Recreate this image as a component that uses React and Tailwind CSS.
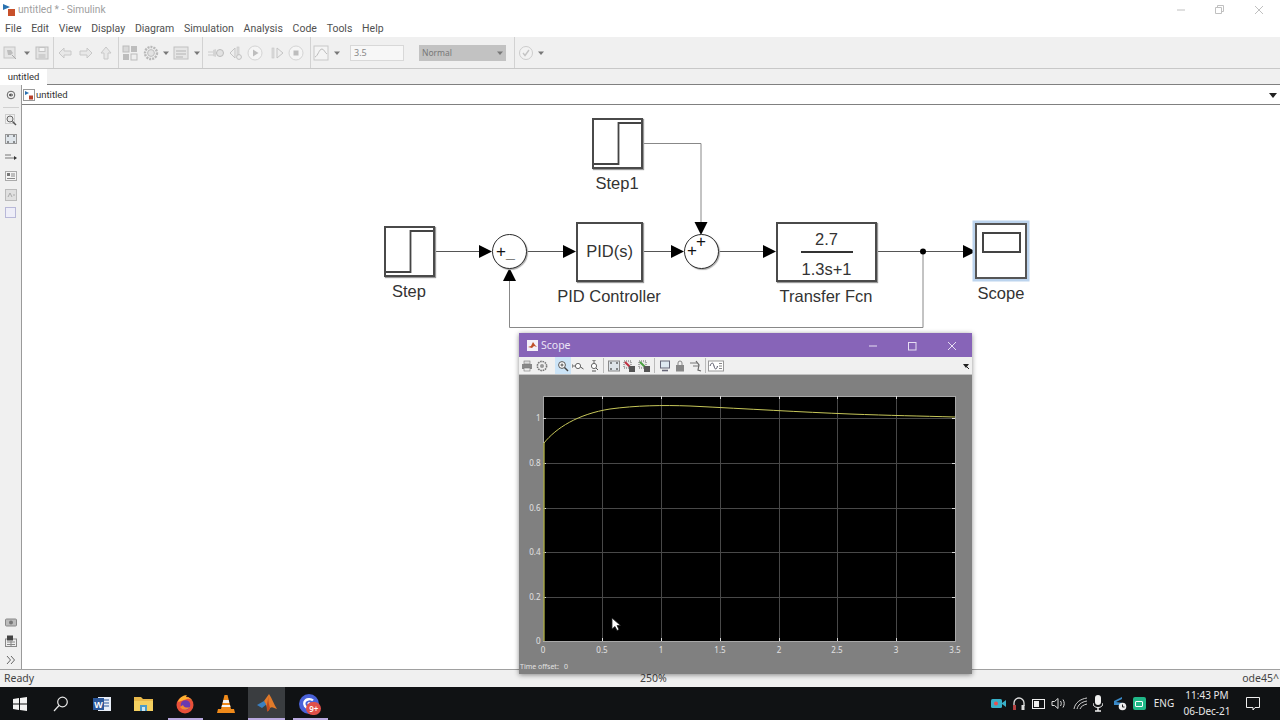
import React from "react";

const ui = { fontFamily: '"Noto Sans", "Open Sans", sans-serif' };
const menuFont = { fontFamily: 'Roboto, "Noto Sans", sans-serif' };

// faded toolbar icons
const Caret = ({ className = "" }) => (
  <svg width="8" height="8" viewBox="0 0 8 8" className={`shrink-0 ${className}`}>
    <path d="M1 2.5h6L4 6z" fill="#777" />
  </svg>
);

const Sep = ({ className = "" }) => <div className={`w-px h-[31px] bg-[#d2d2d2] shrink-0 ${className}`} />;

const Ico = ({ className = "", children }) => (
  <svg width="16" height="16" viewBox="0 0 16 16" fill="none" className={`shrink-0 ${className}`}>
    {children}
  </svg>
);

const OpenIco = () => (
  <>
    <rect x="1" y="2" width="11" height="11" stroke="#c4c4c4" fill="#e6e6e6" />
    <path d="M4 5h4l2 3-2 2H5z" fill="#bdbdbd" />
    <path d="M9 10l4 4" stroke="#aaa" />
  </>
);
const SaveIco = () => (
  <>
    <rect x="2" y="2" width="12" height="12" stroke="#bdbdbd" fill="#e4e4e4" />
    <rect x="5" y="2.5" width="6" height="4" fill="#f4f4f4" stroke="#c4c4c4" />
    <rect x="4.5" y="9" width="7" height="4.5" fill="#cfcfcf" />
  </>
);
const ArrowLeftIco = () => <path d="M2 8l5-5v3h7v4H7v3z" fill="#e8e8e8" stroke="#c8c8c8" />;
const ArrowRightIco = () => <path d="M14 8L9 3v3H2v4h7v3z" fill="#e8e8e8" stroke="#c8c8c8" />;
const ArrowUpIco = () => <path d="M8 2l5 6h-3v6H6V8H3z" fill="#e8e8e8" stroke="#c8c8c8" />;
const GridIco = () => (
  <>
    <rect x="1" y="1" width="6" height="6" fill="#d9d9d9" stroke="#bbb" />
    <rect x="9" y="1" width="6" height="6" fill="#bdbdbd" />
    <rect x="1" y="9" width="6" height="6" fill="#bdbdbd" />
    <rect x="9" y="9" width="6" height="6" fill="#eee" stroke="#bbb" />
  </>
);
const GearIco = () => (
  <>
    <circle cx="8" cy="8" r="6" stroke="#b8b8b8" strokeWidth="2.4" strokeDasharray="2 1" />
    <circle cx="8" cy="8" r="3.4" fill="#e2e2e2" stroke="#bdbdbd" />
  </>
);
const LibIco = () => (
  <>
    <rect x="1" y="2" width="14" height="12" fill="#e6e6e6" stroke="#c0c0c0" />
    <path d="M3 6h10M3 9h10M3 12h7" stroke="#b4b4b4" />
  </>
);
const RecIco = () => (
  <>
    <path d="M0 7h5M0 10h5" stroke="#ccc" />
    <path d="M5 5l3-1v8l-3-1z" fill="#d4d4d4" />
    <circle cx="12" cy="8" r="3.5" fill="#e2e2e2" stroke="#bbb" />
  </>
);
const StepBackIco = () => (
  <>
    <path d="M7 3L2 8l5 5z" fill="#eee" stroke="#c4c4c4" />
    <rect x="9" y="2" width="2" height="9" fill="#ddd" stroke="#c4c4c4" strokeWidth=".6" />
    <circle cx="11" cy="12" r="2.4" fill="#eee" stroke="#c0c0c0" />
  </>
);
const PlayIco = () => (
  <>
    <circle cx="8" cy="8" r="7" fill="#f5f5f5" stroke="#d4d4d4" />
    <path d="M6 4.5L11.5 8 6 11.5z" fill="#bdbdbd" />
  </>
);
const StepFwdIco = () => (
  <>
    <rect x="3" y="3" width="2" height="10" fill="#ddd" stroke="#c4c4c4" strokeWidth=".6" />
    <path d="M8 3l6 5-6 5z" fill="#eee" stroke="#c4c4c4" />
  </>
);
const StopIco = () => (
  <>
    <circle cx="8" cy="8" r="7" fill="#f5f5f5" stroke="#d4d4d4" />
    <rect x="5.5" y="5.5" width="5" height="5" fill="#bdbdbd" />
  </>
);
const ScopeIco = () => (
  <>
    <rect x="1" y="1" width="14" height="14" fill="#f4f4f4" stroke="#c8c8c8" />
    <path d="M2 12c3-1 4-8 7-8 2 0 3 4 5 5" stroke="#bbb" />
  </>
);
const CheckIco = () => (
  <>
    <circle cx="8" cy="8" r="6.5" fill="#f2f2f2" stroke="#ccc" />
    <path d="M5 8l2 2.5L11 5" stroke="#c4c4c4" strokeWidth="1.4" />
  </>
);

const ModelIco = ({ size = 12 }) => (
  <svg width={size} height={size} viewBox="0 0 12 12" className="shrink-0">
    <rect x=".5" y=".5" width="11" height="11" fill="#fff" stroke="#999" />
    <path d="M2 2l4 2-4 2z" fill="#2a6fb0" />
    <rect x="6" y="6.5" width="4" height="4" fill="#b8402a" />
  </svg>
);

const Toolbar = () => (
  <div className="flex items-center h-[32px] bg-[#f0f0f0] border-b border-[#c8c8c8] pl-[3px] shrink-0">
    <Ico><OpenIco /></Ico>
    <Caret className="ml-[4px]" />
    <Ico className="ml-[3px]"><SaveIco /></Ico>
    <Sep className="ml-[3px]" />
    <Ico className="ml-[3px]"><ArrowLeftIco /></Ico>
    <Ico className="ml-[5px]"><ArrowRightIco /></Ico>
    <Ico className="ml-[4px]"><ArrowUpIco /></Ico>
    <Sep className="ml-[4px]" />
    <Ico className="ml-[3px]"><GridIco /></Ico>
    <Ico className="ml-[5px]"><GearIco /></Ico>
    <Caret className="ml-[3px]" />
    <Ico className="ml-[3px]"><LibIco /></Ico>
    <Caret className="ml-[4px]" />
    <Sep className="ml-[1px]" />
    <Ico className="ml-[5px]"><RecIco /></Ico>
    <Ico className="ml-[4px]"><StepBackIco /></Ico>
    <Ico className="ml-[3px]"><PlayIco /></Ico>
    <Ico className="ml-[6px]"><StepFwdIco /></Ico>
    <Ico className="ml-[3px]"><StopIco /></Ico>
    <Sep className="ml-[6px]" />
    <Ico className="ml-[2px]"><ScopeIco /></Ico>
    <Caret className="ml-[4px]" />
    <div className="ml-[9px] w-[54px] h-[16px] bg-[#f7f7f7] border border-[#d8d8d8] text-[9px] leading-[14px] pl-[3px] text-[#888]">3.5</div>
    <div className="ml-[15px] w-[87px] h-[16px] bg-[#c2c2c2] text-[8.5px] leading-[16px] pl-[3px] text-[#777] flex items-center justify-between pr-[2px]">
      Normal
      <Caret />
    </div>
    <Sep className="ml-[8px]" />
    <Ico className="ml-[3px]"><CheckIco /></Ico>
    <Caret className="ml-[3px]" />
  </div>
);

const RailIcon = ({ children, className = "" }) => (
  <svg width="12" height="12" viewBox="0 0 12 12" fill="none" className={`shrink-0 ${className}`}>
    {children}
  </svg>
);

const LeftRail = () => (
  <div className="w-[22px] shrink-0 bg-[#f0f0f0] border-r border-[#9a9a9a] flex flex-col items-center">
    <div className="w-[16px] h-px bg-[#d0d0d0] mt-[2px]" />
    <RailIcon className="mt-[6px]">
      <rect x=".5" y=".5" width="9" height="9" stroke="#aaa" strokeDasharray="1 1" />
      <circle cx="5" cy="5" r="3" fill="#e8e8e8" stroke="#666" />
      <path d="M7.5 7.5L11 11" stroke="#555" strokeWidth="1.4" />
    </RailIcon>
    <RailIcon className="mt-[7px]">
      <rect x=".5" y="1.5" width="11" height="9" fill="#dfe5ea" stroke="#999" />
      <path d="M2 3h2M8 3h2M2 9h2M8 9h2" stroke="#333" />
    </RailIcon>
    <RailIcon className="mt-[6px]">
      <path d="M0 7h9M0 4h6" stroke="#777" />
      <path d="M9 5l3 2-3 2z" fill="#333" />
    </RailIcon>
    <RailIcon className="mt-[7px]">
      <rect x=".5" y="1.5" width="11" height="9" fill="#f4f4f4" stroke="#aaa" />
      <rect x="2" y="3" width="3" height="3" fill="#777" />
      <path d="M6 4h4M6 6h4M2 8.5h8" stroke="#888" />
    </RailIcon>
    <RailIcon className="mt-[7px]">
      <rect x=".5" y=".5" width="11" height="11" fill="#e0e0e0" stroke="#bbb" />
      <path d="M3 8l2-4 2 4M8 6h2" stroke="#aaa" />
    </RailIcon>
    <RailIcon className="mt-[6px]">
      <rect x=".5" y=".5" width="10" height="10" fill="#eeeef8" stroke="#b8b8d8" />
    </RailIcon>
    <RailIcon className="mt-auto">
      <rect x=".5" y="3" width="11" height="7" rx="1" fill="#bbb" stroke="#888" />
      <circle cx="6" cy="6.5" r="2" fill="#777" />
    </RailIcon>
    <RailIcon className="mt-[7px]">
      <rect x=".5" y="4" width="11" height="7.5" fill="#eee" stroke="#888" />
      <rect x="2" y=".5" width="6" height="5" fill="#444" />
      <path d="M2 7h8M2 9.5h8M6 6v5" stroke="#888" />
    </RailIcon>
    <svg width="10" height="10" viewBox="0 0 10 10" fill="none" className="mt-[8px] mb-[4px]">
      <path d="M1 1l3.5 4L1 9M5 1l3.5 4L5 9" stroke="#666" />
    </svg>
  </div>
);

const StepBlock = ({ className }) => (
  <div className={`absolute w-[51px] h-[51px] bg-white border-2 border-[#4a4a4a] shadow-[1px_1px_1px_#999] ${className}`}>
    <svg width="47" height="47" viewBox="0 0 47 47" fill="none" className="block">
      <path d="M0 44h24.500V3H47" stroke="#444" strokeWidth="1.800" />
    </svg>
  </div>
);

const Sum = ({ className, children }) => (
  <div className={`absolute w-[35px] h-[35px] rounded-full bg-white border-[1.5px] border-[#2a2a2a] shadow-[1px_1px_1px_#aaa] ${className}`}>
    {children}
  </div>
);

const Label = ({ className, children }) => (
  <div className={`absolute -translate-x-1/2 whitespace-nowrap text-[16.500px] leading-[18px] text-[#333] ${className}`}>{children}</div>
);

const Canvas = () => (
  <div className="relative flex-1 bg-white" style={{ fontFamily: '"Liberation Sans", Arial, sans-serif' }}>
    <svg viewBox="22 105 1258 564" className="absolute inset-0 w-full h-full" fill="none">
      <g stroke="#555" strokeWidth="1">
        <path d="M435 251.5h46" />
        <path d="M527 251.5h40" />
        <path d="M643 251.5h30" />
        <path d="M719 251.5h46" />
        <path d="M877 251.5h88" />
        <path d="M643 143.5h58V224" stroke="#888" />
        <path d="M923 252v75.5H509.5V280" stroke="#888" />
      </g>
      <g fill="#000">
        <path d="M492 251.5l-13-6.5v13z" />
        <path d="M576 251.5l-13-6.5v13z" />
        <path d="M684 251.5l-13-6.5v13z" />
        <path d="M776 251.5l-13-6.5v13z" />
        <path d="M976 251.5l-13-6.5v13z" />
        <path d="M701 235l-6.5-13h13z" />
        <path d="M509.5 268l-6.5 13h13z" />
        <circle cx="923" cy="251.5" r="3" />
      </g>
    </svg>

    <StepBlock className="left-[570px] top-[13px]" />
    <StepBlock className="left-[362px] top-[121px]" />

    <Sum className="left-[470px] top-[129px]">
      <span className="absolute left-[3px] top-[8px] text-[17px] leading-[18px] text-[#111]">+</span>
      <span className="absolute left-[13px] top-[9px] text-[16px] leading-[18px] font-bold text-[#111]">_</span>
    </Sum>
    <Sum className="left-[662px] top-[129px]">
      <span className="absolute left-[2px] top-[9px] text-[17px] leading-[14px] text-[#111]">+</span>
      <span className="absolute left-[11px] top-0 text-[17px] leading-[14px] text-[#111]">+</span>
    </Sum>

    <div className="absolute left-[554px] top-[117px] w-[67px] h-[60px] pb-[1px] bg-white border-2 border-[#4a4a4a] shadow-[1px_1px_1px_#999] flex items-center justify-center text-[16.500px] text-[#333]">
      PID(s)
    </div>

    <div className="absolute left-[754px] top-[117px] w-[101px] h-[60px] bg-white border-2 border-[#4a4a4a] shadow-[1px_1px_1px_#999] flex flex-col items-center text-[16.500px] leading-[18px] text-[#333]">
      <div className="mt-[6px]">2.7</div>
      <div className="w-[52px] h-[1.5px] bg-[#333] mt-[3px]" />
      <div className="mt-[7px]">1.3s+1</div>
    </div>

    <div className="absolute left-[953px] top-[118px] w-[52px] h-[56px] bg-white border-2 border-[#555] shadow-[0_0_0_2.5px_#bcd4ee] pt-[7px] pl-[5px]">
      <div className="w-[39px] h-[21px] border-2 border-[#444]" />
    </div>

    <Label className="left-[595px] top-[69px]">Step1</Label>
    <Label className="left-[387px] top-[177px]">Step</Label>
    <Label className="left-[587px] top-[182px]">PID Controller</Label>
    <Label className="left-[804px] top-[182px]">Transfer Fcn</Label>
    <Label className="left-[979px] top-[179px]">Scope</Label>
  </div>
);

const xTicks = [
  ["0", 543],
  ["0.5", 602],
  ["1", 661],
  ["1.5", 720],
  ["2", 779],
  ["2.5", 837],
  ["3", 896],
  ["3.5", 955],
];
const yTicks = [
  ["0", 641],
  ["0.2", 597],
  ["0.4", 552],
  ["0.6", 508],
  ["0.8", 463],
  ["1", 418],
];

const ScopeTool = ({ className = "", children }) => (
  <svg width="12" height="12" viewBox="0 0 12 12" fill="none" className={`shrink-0 ${className}`}>
    {children}
  </svg>
);

const ScopeToolbar = () => (
  <div className="flex items-center h-[18px] bg-[#f0f0f0] border-b border-[#c0c0c0] pl-[2px] relative shrink-0">
    <ScopeTool>
      <rect x="1" y="4" width="10" height="5" fill="#888" />
      <rect x="3" y="1" width="6" height="3" fill="#ddd" stroke="#777" strokeWidth=".6" />
      <rect x="3" y="8" width="6" height="3" fill="#eee" stroke="#777" strokeWidth=".6" />
    </ScopeTool>
    <ScopeTool className="ml-[3px]">
      <circle cx="6" cy="6" r="4.6" stroke="#777" strokeWidth="1.6" strokeDasharray="1.6 .8" />
      <circle cx="6" cy="6" r="2" fill="#999" />
    </ScopeTool>
    <div className="ml-[7px] w-[16px] h-[17px] bg-[#cce4f7] flex items-center justify-center shrink-0">
      <ScopeTool>
        <circle cx="5" cy="5" r="3.4" fill="#fff" stroke="#555" />
        <path d="M5 3.4v3.200M3.400 5h3.200" stroke="#333" strokeWidth=".8" />
        <path d="M7.500 7.500L11 11" stroke="#444" strokeWidth="1.400" />
      </ScopeTool>
    </div>
    <ScopeTool className="ml-[1px]">
      <path d="M0 4v4M0 6h3" stroke="#666" />
      <circle cx="6" cy="6" r="2.600" fill="#fff" stroke="#666" />
      <path d="M8.500 7l3 2" stroke="#555" />
    </ScopeTool>
    <ScopeTool className="ml-[4px]">
      <path d="M4 0h4M6 0v3" stroke="#666" />
      <circle cx="6" cy="6" r="2.600" fill="#fff" stroke="#666" />
      <path d="M4 11h4M8 8l2 2" stroke="#555" />
    </ScopeTool>
    <div className="ml-[3px] w-px h-[15px] bg-[#bbb] shrink-0" />
    <ScopeTool className="ml-[4px]">
      <rect x=".5" y="1" width="11" height="10" fill="#dde3e8" stroke="#888" />
      <path d="M2 3h2M8 3h2M2 9h2M8 9h2" stroke="#222" />
    </ScopeTool>
    <ScopeTool className="ml-[3px]">
      <path d="M1 1h7v7H1z" fill="#e8e8e8" stroke="#666" strokeDasharray="1 1" />
      <path d="M2 2l5 5" stroke="#c03040" strokeWidth="2" />
      <rect x="6" y="6" width="6" height="6" fill="#555" />
    </ScopeTool>
    <ScopeTool className="ml-[3px]">
      <path d="M1 1h7v7H1z" fill="#e8e8e8" stroke="#666" strokeDasharray="1 1" />
      <path d="M2 2l5 5" stroke="#4aa040" strokeWidth="2" />
      <rect x="6" y="6" width="6" height="6" fill="#555" />
    </ScopeTool>
    <div className="ml-[4px] w-px h-[15px] bg-[#bbb] shrink-0" />
    <ScopeTool className="ml-[4px]">
      <rect x="1.500" y="1" width="9" height="7" fill="#dfe8f0" stroke="#667" />
      <path d="M3 10.500h6" stroke="#667" strokeWidth="1.600" />
    </ScopeTool>
    <ScopeTool className="ml-[3px]">
      <rect x="2" y="5" width="8" height="6.500" fill="#888" />
      <path d="M4 5V3a2 2 0 014 0v2" stroke="#888" />
    </ScopeTool>
    <ScopeTool className="ml-[4px]">
      <path d="M0 3h7M3 6h6" stroke="#777" />
      <path d="M6 1l3 4-1 5 3 1" stroke="#666" strokeWidth="1.200" />
    </ScopeTool>
    <div className="ml-[3px] w-px h-[15px] bg-[#bbb] shrink-0" />
    <svg width="16" height="12" viewBox="0 0 16 12" fill="none" className="ml-[2px] shrink-0">
      <rect x=".5" y="1" width="15" height="10" fill="#fff" stroke="#999" />
      <path d="M2 6c1.500-4 3-4 4 0s2.500 4 3.500 0" stroke="#556" />
      <path d="M11 3.500h3M11 6h3M11 8.500h3" stroke="#888" />
    </svg>
    <svg width="6" height="6" viewBox="0 0 6 6" className="absolute right-[3px] top-[6px]">
      <path d="M0 1h6L3 5z" fill="#222" />
      <path d="M4 4l2 2" stroke="#222" />
    </svg>
  </div>
);

const ScopeWindow = () => (
  <div className="absolute left-[519px] top-[333px] w-[453px] h-[341px] flex flex-col shadow-[0_1px_5px_rgba(0,0,0,0.45)]">
    <div className="h-[24px] bg-[#8764b8] flex items-center text-[#ebe4f5] text-[10.500px] pl-[8px] pt-[1px] shrink-0" style={ui}>
      <svg width="11" height="11" viewBox="0 0 11 11" className="shrink-0">
        <rect width="11" height="11" fill="#f4f0f8" />
        <path d="M1 7l3-1 2-4 2 3 2 2-3-1-2 2z" fill="#c0502a" />
      </svg>
      <span className="ml-[3px]">Scope</span>
      <svg width="90" height="12" viewBox="0 0 90 12" fill="none" stroke="#e6def2" className="ml-auto mr-[13px] shrink-0">
        <path d="M0 6h8" />
        <rect x="39.500" y="2.500" width="7.500" height="7.500" />
        <path d="M79 2l8 8M87 2l-8 8" />
      </svg>
    </div>
    <ScopeToolbar />
    <div className="flex-1 bg-[#808080]">
      <svg viewBox="519 375 453 299" className="block w-full h-full" fontFamily="Noto Sans, sans-serif" fontSize="8" fill="#e2e2e2">
        <rect x="543.500" y="396.500" width="412" height="245" fill="#000" stroke="#a8a8a8" />
        <g stroke="#484848">
          {xTicks.slice(1, -1).map(([t, x]) => (
            <path key={t} d={`M${x + 0.5} 396v245`} />
          ))}
          {yTicks.slice(1).map(([t, y]) => (
            <path key={t} d={`M543 ${y + 0.5}h412`} />
          ))}
        </g>
        <g stroke="#d8d8d8">
          {xTicks.slice(1, -1).map(([t, x]) => (
            <path key={t} d={`M${x + 0.5} 396v3M${x + 0.5} 638v3`} />
          ))}
          {yTicks.slice(1).map(([t, y]) => (
            <path key={t} d={`M543 ${y + 0.5}h3M952 ${y + 0.5}h3`} />
          ))}
        </g>
        <path d="M544 641V443" fill="none" stroke="#9a9a3c" strokeWidth="1.500" />
        <path
          d="M544 443C556 428 578 414 610 409C636 405.500 662 405 690 406C750 409 800 412 850 414C890 415.500 920 416 955 417"
          fill="none"
          stroke="#c8c85a"
          strokeWidth="1"
        />
        {xTicks.map(([t, x]) => (
          <text key={t} x={x} y="653" textAnchor="middle">{t}</text>
        ))}
        {yTicks.map(([t, y]) => (
          <text key={t} x="540.500" y={y + 3} textAnchor="end">{t}</text>
        ))}
        <text x="520" y="669" fontSize="7">Time offset:</text>
        <text x="564" y="669" fontSize="7">0</text>
      </svg>
    </div>
    <svg width="10" height="15" viewBox="0 0 10 15" className="absolute left-[92px] top-[284px]">
      <path d="M1 1v11l3-2.500 2 4 2-1-2-4h3.500z" fill="#fff" stroke="#222" strokeWidth=".8" />
    </svg>
  </div>
);

const StatusBar = () => (
  <div className="h-[18px] bg-[#f0f0f0] border-t border-[#a0a0a0] flex items-center text-[10.500px] text-[#444] px-[4px] relative shrink-0" style={ui}>
    <span>Ready</span>
    <span className="absolute left-[640px]">250%</span>
    <span className="ml-auto mr-[-3px]">ode45^</span>
  </div>
);

const TaskSlot = ({ active, open, children }) => (
  <div className="w-[41.500px] h-full flex items-center justify-center relative shrink-0">
    {active && <div className="absolute inset-y-0 left-[1px] w-[37px] bg-[#3a3d40]" />}
    <div className="relative flex">{children}</div>
    {open && <div className={`absolute bottom-0 h-[2px] bg-[#b9a9e0] ${active ? "left-[1px] w-[37px]" : "left-[4px] w-[35px]"}`} />}
  </div>
);

const Taskbar = () => (
  <div className="h-[33px] bg-[#101214] flex items-center shrink-0 text-[#e8e8e8]" style={ui}>
    <div className="w-[40px] flex justify-center shrink-0">
      <svg width="14" height="14" viewBox="0 0 14 14" fill="#f2f2f2">
        <path d="M0 2l6-.9V6.600H0zM7 1l7-1v6.600H7zM0 7.400h6v5.500L0 12zM7 7.400h7V14l-7-1z" />
      </svg>
    </div>
    <div className="w-[41px] flex justify-center shrink-0">
      <svg width="16" height="16" viewBox="0 0 16 16" fill="none" stroke="#e8e8e8" strokeWidth="1.200">
        <circle cx="9.500" cy="6" r="4.800" />
        <path d="M6 9.500L1 15" />
      </svg>
    </div>
    <TaskSlot>
      <svg width="18" height="16" viewBox="0 0 18 16">
        <rect x="5" y="1" width="13" height="14" fill="#e8eef8" />
        <path d="M11 4h5M11 7h5M11 10h5" stroke="#2b579a" />
        <rect x="0" y="2" width="11" height="12" fill="#2b579a" />
        <text x="5.500" y="11.500" textAnchor="middle" fontSize="9" fontWeight="700" fill="#fff" fontFamily="Liberation Sans">W</text>
      </svg>
    </TaskSlot>
    <TaskSlot>
      <svg width="19" height="16" viewBox="0 0 19 16">
        <path d="M0 1h7l2 2h10v12H0z" fill="#e8b84a" />
        <rect x="0" y="5" width="19" height="10" fill="#f4d060" />
        <rect x="6" y="9" width="7" height="6" fill="#4a9cc8" />
        <rect x="8" y="11" width="3" height="4" fill="#cde4f0" />
      </svg>
    </TaskSlot>
    <TaskSlot open>
      <svg width="20" height="20" viewBox="0 0 20 20">
        <circle cx="10" cy="11" r="8.500" fill="#e8503a" />
        <path d="M3 8C4 4 8 1 12 1c-1 1-1 2-1 2 4 0 7 3 7.500 7C18 5 14 4 12 5z" fill="#ffb030" />
        <circle cx="10.500" cy="11" r="4.800" fill="#6a3ab0" />
        <path d="M5 13c2 3 7 4 10 0-2 1-6 1-7-2z" fill="#f58a30" />
      </svg>
    </TaskSlot>
    <TaskSlot>
      <svg width="18" height="20" viewBox="0 0 18 20">
        <path d="M7.500 1h3L14 15H4z" fill="#f08a1a" />
        <path d="M6.300 6h5.400l.6 3H5.700zM5 11h8l.5 2h-9z" fill="#f4f4f4" />
        <path d="M1 15h16l1 4H0z" fill="#f08a1a" />
      </svg>
    </TaskSlot>
    <TaskSlot active open>
      <svg width="22" height="20" viewBox="0 0 22 20">
        <path d="M0 11l7-4 3 3-5 4z" fill="#3a7fc0" />
        <path d="M7 7l5-7c3 4 5 11 8 15-3-1-5-3-7-1-1 2-2 4-3 3 0-3 0-6-3-10z" fill="#e07a2a" />
        <path d="M10 10l2-10c-1 4-1 8 1 14-1 2-2 4-3 3z" fill="#c04a20" />
      </svg>
    </TaskSlot>
    <TaskSlot open>
      <div className="relative w-[20px] h-[20px] rounded-full bg-[#4a62d8]">
        <svg width="20" height="20" viewBox="0 0 20 20" className="absolute inset-0">
          <path d="M14 6.500C12 4.500 7 4.500 5.500 8c-1 3 1 6 4 6" fill="none" stroke="#fff" strokeWidth="2.400" />
          <circle cx="10" cy="9.500" r="1.500" fill="#fff" />
        </svg>
        <span className="absolute left-[7px] top-[8px] w-[15px] h-[13px] rounded-full bg-[#e0504a] text-[8px] leading-[13px] text-center text-white font-semibold">9+</span>
      </div>
    </TaskSlot>

    {/* system tray */}
    <div className="ml-auto flex items-center h-full">
      <svg width="16" height="14" viewBox="0 0 16 14" className="shrink-0">
        <rect x="0" y="2" width="11" height="9" rx="1.500" fill="#38b0c8" />
        <circle cx="5" cy="6.500" r="2" fill="#e85050" />
        <path d="M11 6l4-3v7l-4-3z" fill="#38b0c8" />
      </svg>
      <svg width="14" height="14" viewBox="0 0 14 14" fill="none" className="ml-[5px] shrink-0">
        <path d="M2 9V6a5 5 0 0110 0v3" stroke="#ddd" strokeWidth="1.300" />
        <rect x="1" y="8" width="3" height="5" fill="#b04040" />
        <rect x="9.500" y="8" width="3" height="5" fill="#ddd" />
      </svg>
      <svg width="14" height="10" viewBox="0 0 14 10" fill="none" className="ml-[6px] shrink-0">
        <rect x=".5" y=".5" width="12" height="9" stroke="#eee" />
        <rect x="2" y="2" width="5" height="6" fill="#eee" />
      </svg>
      <svg width="15" height="13" viewBox="0 0 15 13" fill="none" stroke="#ddd" className="ml-[4.500px] shrink-0">
        <path d="M1 4.500h2.500L7 1.500v10l-3.500-3H1z" />
        <path d="M9.500 4c1 1.500 1 3.500 0 5M12 2.500c1.600 2.500 1.600 5.500 0 8" />
      </svg>
      <svg width="15" height="13" viewBox="0 0 15 13" fill="none" stroke="#cfcfcf" className="ml-[7px] shrink-0">
        <path d="M1 12C2 6 7 2 14 1M4 12c1-4 4-7 10-8M7 12c1-2.500 3-4 7-5" />
      </svg>
      <svg width="10" height="17" viewBox="0 0 10 17" className="ml-[5.500px] shrink-0">
        <rect x="2" y="0" width="6" height="10" rx="3" fill="#f0f0f0" />
        <path d="M0 8c0 3 2 4.500 5 4.500S10 11 10 8" fill="none" stroke="#f0f0f0" />
        <path d="M5 12.500V16M2 16h6" stroke="#f0f0f0" strokeWidth="1.400" />
      </svg>
      <svg width="14" height="15" viewBox="0 0 14 15" className="ml-[10px] shrink-0">
        <path d="M1 5l8-4v2L3 6l7 1-1 2H1z" fill="#3a8ac8" />
        <circle cx="9.500" cy="10.500" r="3.800" fill="#eee" />
        <path d="M9.500 8.500v2.500h2" stroke="#222" fill="none" />
      </svg>
      <div className="ml-[5.500px] w-[13px] h-[13px] rounded-[2px] bg-[#20b888] flex items-center justify-center shrink-0">
        <div className="w-[8px] h-[6px] border border-white rounded-[1px]" />
      </div>
      <span className="ml-[7.500px] text-[10px] w-[22px] text-center">ENG</span>
      <div className="w-[64px] flex flex-col items-center text-[10px] leading-[15.500px]">
        <span>11:43 PM</span>
        <span>06-Dec-21</span>
      </div>
      <svg width="14" height="14" viewBox="0 0 14 14" fill="none" stroke="#eee" className="ml-[7px] mr-[20px] shrink-0">
        <path d="M.5 .5h13v10H9l-2 2.500V10.500H.5z" />
      </svg>
    </div>
  </div>
);

export default function App() {
  return (
    <div className="relative w-[1280px] h-[720px] overflow-hidden flex flex-col bg-white" style={ui}>
      {/* title */}
      <div className="h-[20px] flex items-center bg-white text-[10.200px] text-[#a0a0a0] shrink-0 relative" style={menuFont}>
        <svg width="14" height="14" viewBox="0 0 14 14" className="ml-[2px] shrink-0">
          <path d="M1 1l7 3-7 3z" fill="#2a72b0" />
          <rect x="6" y="6" width="7" height="7" fill="#c8502a" />
        </svg>
        <span className="ml-[2px]">untitled * - Simulink</span>
        <svg width="86" height="10" viewBox="0 0 86 10" fill="none" stroke="#c0c0c0" className="ml-auto mr-[17px] shrink-0">
          <path d="M0 5h8" />
          <path d="M38.500 2.500h6v6h-6zM40.500 2.500v-2h6v6h-2" />
          <path d="M78 1l8 8M86 1l-8 8" />
        </svg>
      </div>

      {/* menu */}
      <div className="h-[17px] flex items-center gap-[9.750px] pl-[5px] bg-white text-[10.500px] text-[#505050] shrink-0" style={menuFont}>
        {["File", "Edit", "View", "Display", "Diagram", "Simulation", "Analysis", "Code", "Tools", "Help"].map((m) => (
          <span key={m}>{m}</span>
        ))}
      </div>

      <Toolbar />

      {/* tabs */}
      <div className="h-[16px] bg-[#f0f0f0] flex shrink-0 border-b border-[#808080]" style={menuFont}>
        <div className="w-[47px] bg-white text-[9.500px] leading-[15px] text-center text-[#333] h-[16px]">untitled</div>
      </div>

      {/* breadcrumb */}
      <div className="h-[20px] flex shrink-0" style={menuFont}>
        <div className="w-[22px] bg-[#f0f0f0] flex items-center justify-center border-r border-[#9a9a9a] shrink-0">
          <svg width="10" height="10" viewBox="0 0 10 10" fill="none">
            <circle cx="5" cy="5" r="3.800" stroke="#666" />
            <path d="M7 5H3.500M5 3.500L3.500 5 5 6.500" stroke="#222" />
          </svg>
        </div>
        <div className="flex-1 bg-white border-b border-[#808080] flex items-center pl-[1px] pt-[1px] text-[9.500px] text-[#333]">
          <ModelIco />
          <span className="ml-[1px]">untitled</span>
          <svg width="8" height="5" viewBox="0 0 8 5" className="ml-auto mr-[3px]">
            <path d="M0 0h8L4 5z" fill="#222" />
          </svg>
        </div>
      </div>

      {/* workspace */}
      <div className="flex flex-1 min-h-0">
        <LeftRail />
        <Canvas />
      </div>

      <StatusBar />
      <Taskbar />

      <ScopeWindow />
    </div>
  );
}
